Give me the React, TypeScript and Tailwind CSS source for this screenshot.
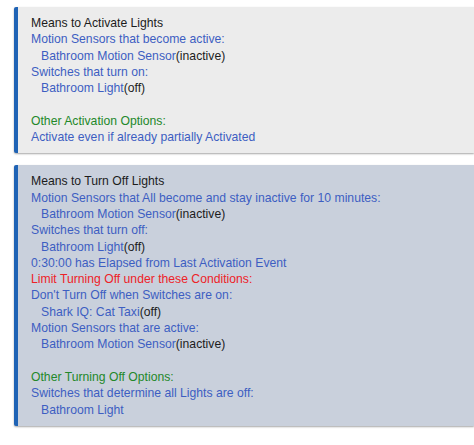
import React from "react";

type Tone = "head" | "blue" | "green" | "red" | "blank";

interface Line {
  tone: Tone;
  text?: string;
  note?: string;
  indent?: boolean;
}

const activate: Line[] = [
  { tone: "head", text: "Means to Activate Lights" },
  { tone: "blue", text: "Motion Sensors that become active:" },
  { tone: "blue", text: "Bathroom Motion Sensor", note: "(inactive)", indent: true },
  { tone: "blue", text: "Switches that turn on:" },
  { tone: "blue", text: "Bathroom Light", note: "(off)", indent: true },
  { tone: "blank" },
  { tone: "green", text: "Other Activation Options:" },
  { tone: "blue", text: "Activate even if already partially Activated" },
];

const turnOff: Line[] = [
  { tone: "head", text: "Means to Turn Off Lights" },
  { tone: "blue", text: "Motion Sensors that All become and stay inactive for 10 minutes:" },
  { tone: "blue", text: "Bathroom Motion Sensor", note: "(inactive)", indent: true },
  { tone: "blue", text: "Switches that turn off:" },
  { tone: "blue", text: "Bathroom Light", note: "(off)", indent: true },
  { tone: "blue", text: "0:30:00 has Elapsed from Last Activation Event" },
  { tone: "red", text: "Limit Turning Off under these Conditions:" },
  { tone: "blue", text: "Don't Turn Off when Switches are on:" },
  { tone: "blue", text: "Shark IQ: Cat Taxi", note: "(off)", indent: true },
  { tone: "blue", text: "Motion Sensors that are active:" },
  { tone: "blue", text: "Bathroom Motion Sensor", note: "(inactive)", indent: true },
  { tone: "blank" },
  { tone: "green", text: "Other Turning Off Options:" },
  { tone: "blue", text: "Switches that determine all Lights are off:" },
  { tone: "blue", text: "Bathroom Light", indent: true },
];

const toneCls: Record<Tone, string> = {
  head: "text-[#1c1c1c]",
  blue: "text-[#3d5ec2]",
  green: "text-[#23882a]",
  red: "text-[#ee2228]",
  blank: "",
};

function Card({ lines, bg }: { lines: Line[]; bg: string }) {
  return (
    <div
      className={`${bg} ml-[14px] w-[460px] rounded-l-[2px] border-l-4 border-[#1f63b5] py-2 pl-[13px] shadow-[0_1px_2px_rgba(0,0,0,0.35)]`}
    >
      {lines.map((l, i) =>
        l.tone === "blank" ? (
          <div key={i} className="h-[16.3px]" />
        ) : (
          <div
            key={i}
            className={`${toneCls[l.tone]} ${l.indent ? "pl-[10px]" : ""} whitespace-nowrap`}
          >
            {l.text}
            {l.note && <span className="text-[#1c1c1c]">{l.note}</span>}
          </div>
        )
      )}
    </div>
  );
}

export default function App() {
  return (
    <div className="h-[445px] w-[474px] overflow-hidden bg-white pt-[7px] font-['Liberation_Sans',Arial,sans-serif] text-[12.2px] leading-[16.3px]">
      <div className="flex flex-col gap-3">
        <Card lines={activate} bg="bg-[#ececec]" />
        <Card lines={turnOff} bg="bg-[#c9d0dc]" />
      </div>
    </div>
  );
}
